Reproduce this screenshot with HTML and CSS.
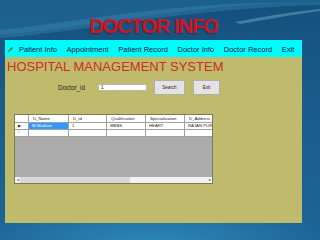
FILE: index.html
```html
<!DOCTYPE html>
<html>
<head>
<meta charset="utf-8">
<link rel="stylesheet" href="styles.css">
</head>
<body>
<div class="slide">
  <svg class="waves" width="320" height="240" viewBox="0 0 320 240">
    <path d="M0 0 H320 V2 C250 2 170 12 90 24 C50 30 20 33 0 35 Z" fill="#2a7db0" opacity="0.35"/>
    <path d="M0 30 C60 24 120 12 200 6 C240 3 280 2 320 2 V5 C260 6 180 14 100 26 C60 32 25 36 0 38 Z" fill="#4fa6cf" opacity="0.25"/>
    <path d="M235 22 C262 17 290 12 320 9 V11 C290 15 264 20 240 24 Z" fill="#8fd4ea" opacity="0.35"/>
  </svg>
  <h1 class="title">DOCTOR INFO</h1>
  <div class="window">
    <nav class="menu">
      <span class="menu-item">
        <svg class="menu-icon" width="5" height="5" viewBox="0 0 5 5"><path d="M0.5 4.5 L4.5 0.5" stroke="#7a5a2a" stroke-width="1.2"/><path d="M0.5 2 L2.5 4" stroke="#d4a030" stroke-width="1"/></svg>
        Patient Info
      </span>
      <span class="menu-item">Appointment</span>
      <span class="menu-item">Patient Record</span>
      <span class="menu-item">Doctor Info</span>
      <span class="menu-item">Doctor Record</span>
      <span class="menu-item">Exit</span>
    </nav>
    <div class="form">
      <h2 class="app-title">HOSPITAL MANAGEMENT SYSTEM</h2>
      <div class="search-row">
        <span class="label">Doctor_id</span>
        <span class="textbox">1</span>
        <span class="btn btn-search">Search</span>
        <span class="btn btn-exit">Exit</span>
      </div>
      <div class="grid">
        <div class="grid-body">
          <div class="grid-row header">
            <span class="cell rh"></span>
            <span class="cell">D_Name</span>
            <span class="cell">D_id</span>
            <span class="cell">Qualification</span>
            <span class="cell">Specialization</span>
            <span class="cell">D_Address</span>
          </div>
          <div class="grid-row">
            <span class="cell rh">&#9654;</span>
            <span class="cell selected">M Mudasir</span>
            <span class="cell">1</span>
            <span class="cell">MBBS</span>
            <span class="cell">HEART</span>
            <span class="cell">RAJAN PUR</span>
          </div>
          <div class="grid-row">
            <span class="cell rh">*</span>
            <span class="cell"></span>
            <span class="cell"></span>
            <span class="cell"></span>
            <span class="cell"></span>
            <span class="cell"></span>
          </div>
        </div>
        <div class="hscroll">
          <span class="arrow">&#9666;</span>
          <span class="thumb"></span>
          <span class="track"></span>
          <span class="arrow">&#9656;</span>
        </div>
      </div>
    </div>
  </div>
</div>
</body>
</html>
```

FILE: styles.css
```css
html, body {
  margin: 0;
  padding: 0;
}
body {
  width: 320px;
  height: 240px;
  overflow: hidden;
  font-family: "Liberation Sans", Arial, sans-serif;
}
.slide {
  position: relative;
  width: 320px;
  height: 240px;
  overflow: hidden;
  background:
    radial-gradient(ellipse 180px 60px at 150px 250px, #2e8abb 0%, rgba(46,138,187,0) 100%),
    linear-gradient(180deg, #15507c 0%, #1a5c8c 45%, #1d6596 100%);
}
.waves {
  position: absolute;
  left: 0;
  top: 0;
}
.title {
  position: relative;
  margin: 0 0 0 5px;
  width: 297px;
  height: 40px;
  box-sizing: border-box;
  padding-top: 14px;
  line-height: 24px;
  font-size: 20px;
  font-weight: bold;
  letter-spacing: -1px;
  text-align: center;
  color: #cf1424;
  text-shadow: 0 1px 1px rgba(60,0,0,0.35);
}
.window {
  position: relative;
  margin-left: 5px;
  width: 297px;
  height: 183px;
  background: #c0ba6c;
}
.menu {
  display: flex;
  align-items: center;
  gap: 9.6px;
  height: 17px;
  box-sizing: border-box;
  padding: 2px 0 0 3px;
  background: #00fbfb;
  font-size: 7.5px;
  color: #10204a;
  white-space: nowrap;
}
.menu-item {
  display: flex;
  align-items: center;
}
.menu-icon {
  margin-right: 6px;
}
.form {
  padding-left: 2px;
}
.app-title {
  margin: 3px 0 0 0;
  font-size: 13px;
  line-height: 13px;
  font-weight: normal;
  color: #c9301f;
  white-space: nowrap;
}
.search-row {
  display: flex;
  align-items: center;
  height: 15px;
  margin-top: 7px;
}
.label {
  margin-left: 51px;
  width: 27px;
  font-size: 6.3px;
  color: #222;
  white-space: nowrap;
}
.textbox {
  margin-left: 13px;
  width: 49px;
  height: 7px;
  box-sizing: border-box;
  background: #fff;
  border: 1px solid #b8b8b0;
  font-size: 4.5px;
  line-height: 5px;
  padding-left: 2px;
}
.btn {
  height: 15px;
  box-sizing: border-box;
  background: #e3e3e3;
  border: 1px solid #b0b0a8;
  font-size: 4.5px;
  display: flex;
  align-items: center;
  justify-content: center;
  color: #222;
}
.btn-search {
  margin-left: 7px;
  width: 31px;
}
.btn-exit {
  margin-left: 8px;
  width: 27px;
}
.grid {
  margin: 19px 0 0 7px;
  width: 199px;
  height: 70px;
  box-sizing: border-box;
  border: 1px solid #7c7a5a;
  background: #ababab;
  display: flex;
  flex-direction: column;
  justify-content: space-between;
  overflow: hidden;
}
.grid-body {
  overflow: hidden;
}
.grid-row {
  display: grid;
  grid-template-columns: 14px 40px 38px 39px 39px 39px;
  height: 7px;
  background: #fff;
  width: 209px;
}
.grid-row.header {
  height: 8px;
}
.cell {
  box-sizing: border-box;
  border-right: 1px solid #a0a0a0;
  border-bottom: 1px solid #a0a0a0;
  font-size: 4.3px;
  line-height: 6px;
  padding-left: 3px;
  white-space: nowrap;
  overflow: hidden;
  color: #222;
}
.header .cell {
  line-height: 7px;
  padding-left: 4px;
}
.cell.rh {
  padding-left: 3px;
  font-size: 3.5px;
}
.cell.selected {
  background: #3399ff;
  color: #fff;
}
.hscroll {
  display: flex;
  height: 6px;
  background: #f2f2f2;
}
.arrow {
  width: 5px;
  font-size: 4px;
  line-height: 6px;
  text-align: center;
  color: #555;
}
.thumb {
  width: 110px;
  background: #d8d8d8;
}
.track {
  flex: 1;
}
```
